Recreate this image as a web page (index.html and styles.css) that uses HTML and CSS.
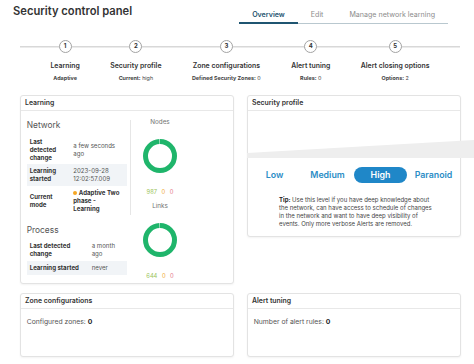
FILE: index.html
```html
<!DOCTYPE html>
<html lang="en">
<head>
<meta charset="utf-8">
<title>Security control panel</title>
<link rel="stylesheet" href="styles.css">
</head>
<body>
<div class="page">
  <header class="topbar">
    <h1 class="title">Security control panel</h1>
    <nav class="tabs">
      <a class="tab active">Overview</a>
      <a class="tab">Edit</a>
      <a class="tab">Manage network learning</a>
    </nav>
  </header>

  <ol class="stepper">
    <li class="step"><span class="step-num">1</span><span class="step-title">Learning</span><span class="step-sub"><b>Adaptive</b></span></li>
    <li class="step"><span class="step-num">2</span><span class="step-title">Security profile</span><span class="step-sub"><b>Current:</b> high</span></li>
    <li class="step"><span class="step-num">3</span><span class="step-title">Zone configurations</span><span class="step-sub"><b>Defined Security Zones:</b> 0</span></li>
    <li class="step"><span class="step-num">4</span><span class="step-title">Alert tuning</span><span class="step-sub"><b>Rules:</b> 0</span></li>
    <li class="step"><span class="step-num">5</span><span class="step-title">Alert closing options</span><span class="step-sub"><b>Options:</b> 2</span></li>
  </ol>

  <main class="grid">
    <section class="card card-learning">
      <h2 class="card-head">Learning</h2>
      <div class="learn-body">
        <div class="learn-left">
          <div class="learn-sec learn-net">
            <h3 class="sec-title">Network</h3>
            <table class="kv kv-net">
              <tr><th>Last detected change</th><td>a few seconds ago</td></tr>
              <tr><th>Learning started</th><td>2023-09-28 12:02:57.009</td></tr>
              <tr><th>Current mode</th><td class="mode"><span class="dot"></span>Adaptive Two phase - Learning</td></tr>
            </table>
          </div>
          <div class="learn-sec learn-proc">
            <h3 class="sec-title">Process</h3>
            <table class="kv kv-proc">
              <tr><th>Last detected change</th><td>a month ago</td></tr>
              <tr><th>Learning started</th><td>never</td></tr>
            </table>
          </div>
        </div>
        <div class="learn-charts">
          <div class="chart">
            <div class="chart-label">Nodes</div>
            <svg class="donut" width="34" height="34" viewBox="0 0 34 34"><circle cx="17" cy="17" r="14.5" fill="none" stroke="#1fb56b" stroke-width="5" stroke-dasharray="90 1.1" transform="rotate(-90 17 17)"/></svg>
            <div class="chart-nums"><span class="n-ok">987</span><span class="n-warn">0</span><span class="n-bad">0</span></div>
          </div>
          <div class="chart">
            <div class="chart-label">Links</div>
            <svg class="donut" width="34" height="34" viewBox="0 0 34 34"><circle cx="17" cy="17" r="14.5" fill="none" stroke="#1fb56b" stroke-width="5" stroke-dasharray="90 1.1" transform="rotate(-90 17 17)"/></svg>
            <div class="chart-nums"><span class="n-ok">644</span><span class="n-warn">0</span><span class="n-bad">0</span></div>
          </div>
        </div>
      </div>
    </section>

    <section class="card card-profile">
      <h2 class="card-head">Security profile</h2>
      <div class="profile-body">
        <svg class="band" width="227" height="18" viewBox="0 0 227 18" preserveAspectRatio="none"><polygon points="0,13 227,0 227,18 0,18" fill="#eeeeee"/></svg>
        <div class="levels">
          <span class="level">Low</span>
          <span class="level">Medium</span>
          <span class="level level-on">High</span>
          <span class="level">Paranoid</span>
        </div>
        <p class="tip"><b>Tip:</b> Use this level if you have deep knowledge about<br>the network, can have access to schedule of changes<br>in the network and want to have deep visibility of<br>events. Only more verbose Alerts are removed.</p>
      </div>
    </section>

    <section class="card card-small">
      <h2 class="card-head">Zone configurations</h2>
      <p class="small-body">Configured zones: <b>0</b></p>
    </section>

    <section class="card card-small">
      <h2 class="card-head">Alert tuning</h2>
      <p class="small-body">Number of alert rules: <b>0</b></p>
    </section>
  </main>
</div>
</body>
</html>
```

FILE: styles.css
```css
html, body {
  margin: 0;
  padding: 0;
  background: #ffffff;
  overflow: hidden;
}
body {
  font-family: Inter, "Noto Sans", "DejaVu Sans", sans-serif;
  color: #333333;
}
.page {
  width: 474px;
  height: 364px;
}

/* top bar */
.topbar {
  display: flex;
  justify-content: space-between;
  align-items: flex-start;
  height: 30px;
  padding: 0 26px 0 13px;
}
.title {
  margin: 0;
  padding-top: 4px;
  font-size: 11.2px;
  line-height: 14px;
  font-weight: 600;
  color: #333;
}
.tabs {
  display: flex;
  margin-top: 10px;
  border-bottom: 1px solid #b9c8cf;
}
.tab {
  padding: 0 13px 2px;
  font-size: 7.1px;
  line-height: 10px;
  color: #8c8c8c;
}
.tab.active {
  color: #1f5571;
  font-weight: 600;
  border-bottom: 2px solid #1f5571;
  margin-bottom: -1.5px;
}

/* stepper */
.stepper {
  list-style: none;
  margin: 10px 14px 0 20px;
  padding: 0;
  display: flex;
  justify-content: space-evenly;
  background: linear-gradient(#d8d8d8, #d8d8d8) no-repeat 0 6px / 100% 1.5px;
}
.step {
  display: flex;
  flex-direction: column;
  align-items: center;
}
.step-num {
  box-sizing: border-box;
  width: 13px;
  height: 13px;
  border: 1.5px solid #a3a3a3;
  border-radius: 50%;
  background: #fff;
  font-size: 6px;
  font-weight: 700;
  line-height: 10px;
  text-align: center;
  color: #333;
}
.step-title {
  margin-top: 7.5px;
  font-size: 6.9px;
  line-height: 9px;
  font-weight: 600;
  color: #333;
  white-space: nowrap;
}
.step-sub {
  margin-top: 5px;
  font-size: 5.4px;
  line-height: 7px;
  color: #444;
  white-space: nowrap;
}
.step-sub b { font-weight: 700; }

/* grid */
.grid {
  display: grid;
  grid-template-columns: 214px 214px;
  column-gap: 13px;
  row-gap: 9px;
  margin: 13.5px 0 0 20px;
  align-items: start;
}
.card {
  box-sizing: border-box;
  border: 1px solid #e3e3e3;
  border-radius: 3px;
  background: #fff;
  box-shadow: 0 1px 2px rgba(0, 0, 0, 0.05);
}
.card-head {
  margin: 0;
  padding: 0 4px;
  font-size: 6.9px;
  line-height: 14px;
  font-weight: 600;
  color: #333;
  border-bottom: 1px solid #e8e8e8;
}

/* learning */
.card-learning { height: 189px; }
.learn-body {
  display: flex;
}
.learn-left {
  width: 110px;
  padding-top: 7px;
}
.learn-sec {
  padding: 0 3px 0 5.7px;
}
.learn-net {
  border-right: 1px solid #e6e6e6;
}
.learn-proc {
  margin-top: 10px;
}
.sec-title {
  margin: 0;
  font-size: 8.4px;
  line-height: 10px;
  font-weight: 400;
  color: #555;
}
.learn-net .sec-title { margin: 2px 0 5px; }
.learn-proc .sec-title { margin: 0 0 4px; }
.kv {
  width: 100px;
  border-collapse: collapse;
  table-layout: fixed;
}
.kv th, .kv td {
  padding: 3px 3px;
  font-size: 6.1px;
  line-height: 7.8px;
  text-align: left;
  vertical-align: middle;
}
.kv th {
  font-weight: 700;
  color: #333;
}
.kv td {
  font-weight: 400;
  color: #555;
  padding-right: 5px;
}
.kv tr:nth-child(even) { background: #f1f4f7; }
.kv-net th { width: 37.6px; }
.kv-proc th { width: 56px; }
.kv td.mode {
  font-weight: 700;
  color: #333;
}
.dot {
  display: inline-block;
  width: 4px;
  height: 4px;
  border-radius: 50%;
  background: #f5a623;
  margin-right: 1.5px;
  vertical-align: 0;
}

.learn-charts {
  width: 58px;
  padding-top: 6.7px;
  text-align: center;
}
.chart-label {
  font-size: 6.3px;
  line-height: 8px;
  color: #707070;
}
.donut {
  display: block;
  margin: 13.5px auto 0;
}
.chart-nums {
  margin-top: 15px;
  font-size: 5.8px;
  line-height: 8px;
  display: flex;
  justify-content: center;
  gap: 4.5px;
}
.chart + .chart { margin-top: 5.5px; }
.n-ok { color: #9bc45a; }
.n-warn { color: #f0a830; }
.n-bad { color: #e57585; }

/* profile */
.card-profile { height: 142px; }
.profile-body {
  position: relative;
  padding-top: 56px;
}
.band {
  position: absolute;
  left: -1px;
  top: 29px;
  display: block;
}
.levels {
  position: relative;
  display: grid;
  grid-template-columns: repeat(4, 1fr);
  height: 16px;
}
.level {
  font-size: 8.8px;
  line-height: 16px;
  font-weight: 600;
  color: #2b8dc6;
  text-align: center;
}
.level-on {
  background: #1f87c8;
  color: #fff;
  border-radius: 8px;
}
.tip {
  margin: 12.6px 0 0 31px;
  font-size: 6px;
  line-height: 8.1px;
  color: #444;
  white-space: nowrap;
}
.tip b { color: #222; font-weight: 700; }

/* small cards */
.card-small { height: 64px; }
.small-body {
  margin: 0;
  padding: 7.5px 5.7px 0;
  font-size: 6.8px;
  line-height: 9px;
  color: #555;
}
.small-body b { color: #222; font-weight: 700; }
```
